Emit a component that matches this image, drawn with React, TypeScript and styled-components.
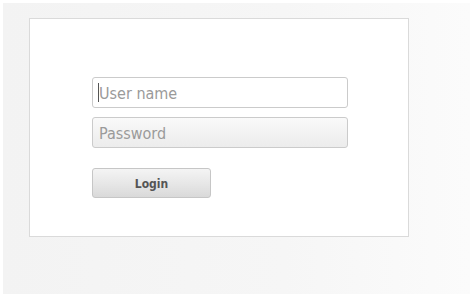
import React from "react";
import styled, { createGlobalStyle } from "styled-components";

const Global = createGlobalStyle`
  html, body { margin: 0; padding: 0; background: #ffffff; }
  body { font-family: "DejaVu Sans Condensed", "DejaVu Sans", Verdana, sans-serif; }
  * { box-sizing: border-box; }
`;

const Page = styled.div`
  width: 474px;
  height: 297px;
  padding: 3px 4px 3px 3px;
  background: #ffffff;
`;

const Backdrop = styled.div`
  width: 100%;
  height: 100%;
  padding: 15px 0 0 26px;
  background: linear-gradient(to right, #f3f3f3 0%, #f6f6f6 60%, #fbfbfb 100%);
`;

const Panel = styled.div`
  width: 380px;
  height: 219px;
  background: #ffffff;
  border: 1px solid #dadada;
  padding: 58px 0 0 62px;
  display: flex;
  flex-direction: column;
`;

const Fields = styled.div`
  display: flex;
  flex-direction: column;
  gap: 9px;
`;

const FieldWrap = styled.div`
  position: relative;
  width: 256px;
  height: 31px;
`;

const Input = styled.input<{ $shaded?: boolean }>`
  width: 100%;
  height: 100%;
  border: 1px solid #cbcbcb;
  border-radius: 3px;
  padding: 1px 0 0 6px;
  font-family: "DejaVu Sans Condensed", "DejaVu Sans", Verdana, sans-serif;
  font-stretch: condensed;
  font-size: 16px;
  color: #555;
  outline: none;
  background: ${(p) =>
    p.$shaded
      ? "linear-gradient(to bottom, #fafafa 0%, #f1f1f1 60%, #ececec 100%)"
      : "#ffffff"};
  &::placeholder {
    color: #9a9a9a;
  }
`;

const Caret = styled.span`
  position: absolute;
  left: 6px;
  top: 6px;
  width: 1px;
  height: 19px;
  background: #555;
`;

const Button = styled.button`
  margin-top: 20px;
  width: 119px;
  height: 30px;
  border: 1px solid #c6c6c6;
  border-radius: 3px;
  background: linear-gradient(to bottom, #f4f4f4 0%, #e6e6e6 55%, #d9d9d9 100%);
  font-family: "DejaVu Sans Condensed", "DejaVu Sans", Verdana, sans-serif;
  font-stretch: condensed;
  font-weight: bold;
  font-size: 12px;
  color: #555;
  padding: 1px 0 0;
  cursor: pointer;
`;

export default function App() {
  return (
    <>
      <Global />
      <Page>
        <Backdrop>
          <Panel>
            <Fields>
              <FieldWrap>
                <Input type="text" placeholder="User name" />
                <Caret />
              </FieldWrap>
              <FieldWrap>
                <Input type="password" placeholder="Password" $shaded />
              </FieldWrap>
            </Fields>
            <Button>Login</Button>
          </Panel>
        </Backdrop>
      </Page>
    </>
  );
}
